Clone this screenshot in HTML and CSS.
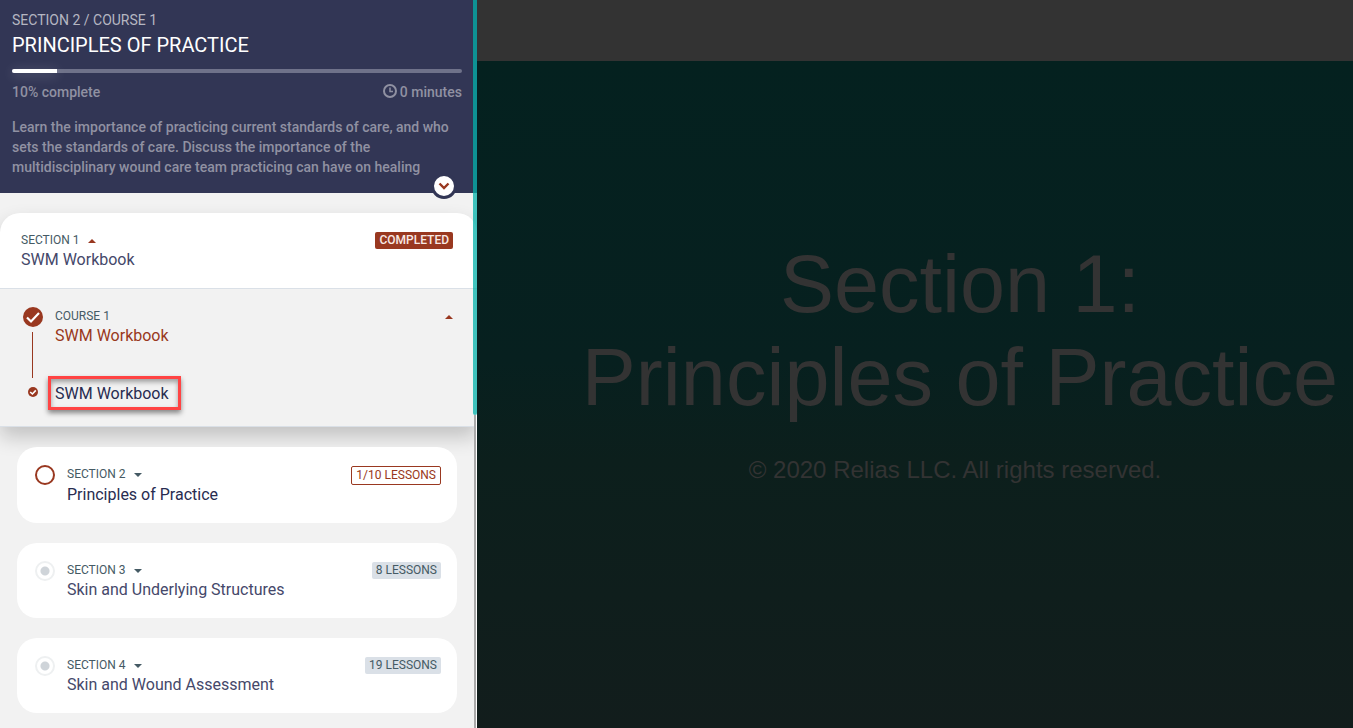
FILE: index.html
```html
<!DOCTYPE html>
<html lang="en">
<head>
    <meta charset="utf-8">
    <title>Principles of Practice</title>
    <link rel="stylesheet" href="styles.css">
</head>
<body>

<div class="player">
    <aside class="sidebar">
        <header class="course-header">
            <div class="course-path">SECTION 2 / COURSE 1</div>
            <h1 class="course-title">PRINCIPLES OF PRACTICE</h1>
            <div class="progress"><div class="progress-bar" style="width: 10%"></div></div>
            <div class="course-meta">
                <span>10% complete</span>
                <span class="time">
                    <svg class="clock" viewBox="0 0 14 14" width="14" height="14" fill="none" stroke="currentColor" stroke-width="2">
                        <circle cx="7" cy="7" r="6"/>
                        <path d="M7 3.5V7.5H10" stroke-width="1.5"/>
                    </svg>
                    0 minutes
                </span>
            </div>
            <p class="course-description">Learn the importance of practicing current standards of care, and who sets the standards of care. Discuss the importance of the multidisciplinary wound care team practicing can have on healing</p>
            <button class="expand" type="button" aria-label="Show more">
                <svg viewBox="0 0 12 8" width="12" height="8" fill="none" stroke="#993820" stroke-width="2.4">
                    <path d="M1.5 1.5L6 6L10.5 1.5"/>
                </svg>
            </button>
        </header>

        <section class="section-open">
            <div class="section-head">
                <button class="section-toggle" type="button">
                    <span class="label">SECTION 1 <i class="caret up"></i></span>
                    <span class="name">SWM Workbook</span>
                </button>
                <span class="badge done">COMPLETED</span>
            </div>
            <div class="section-body">
                <div class="timeline">
                    <svg viewBox="0 0 20 20" width="20" height="20">
                        <circle cx="10" cy="10" r="10" fill="#993820"/>
                        <path d="M4 10.5L8 14.5L16 6" fill="none" stroke="#fff" stroke-width="2.2"/>
                    </svg>
                    <div class="timeline-line"></div>
                    <svg viewBox="0 0 10 10" width="10" height="10">
                        <circle cx="5" cy="5" r="5" fill="#993820"/>
                        <path d="M2.2 5L4.4 7L7.8 3.4" fill="none" stroke="#fff" stroke-width="1.6"/>
                    </svg>
                </div>
                <div class="course">
                    <button class="course-toggle" type="button">
                        <span>
                            <span class="label">COURSE 1</span>
                            <span class="name active">SWM Workbook</span>
                        </span>
                        <i class="caret up"></i>
                    </button>
                    <a class="lesson" href="#">SWM Workbook</a>
                </div>
            </div>
        </section>

        <div class="section-list">
            <section class="card">
                <span class="status current"></span>
                <button class="section-toggle" type="button">
                    <span class="label">SECTION 2 <i class="caret"></i></span>
                    <span class="name dark">Principles of Practice</span>
                </button>
                <span class="badge outline">1/10 LESSONS</span>
            </section>
            <section class="card">
                <span class="status"></span>
                <button class="section-toggle" type="button">
                    <span class="label">SECTION 3 <i class="caret"></i></span>
                    <span class="name">Skin and Underlying Structures</span>
                </button>
                <span class="badge">8 LESSONS</span>
            </section>
            <section class="card">
                <span class="status"></span>
                <button class="section-toggle" type="button">
                    <span class="label">SECTION 4 <i class="caret"></i></span>
                    <span class="name">Skin and Wound Assessment</span>
                </button>
                <span class="badge">19 LESSONS</span>
            </section>
        </div>

        <div class="scroll">
            <div class="scroll-thumb"></div>
            <div class="scroll-track"></div>
        </div>
    </aside>

    <main class="stage">
        <div class="stage-bar"></div>
        <div class="slide">
            <h2 class="slide-title">Section 1:<br>Principles of Practice</h2>
            <p class="slide-copyright">© 2020 Relias LLC. All rights reserved.</p>
        </div>
    </main>
</div>

</body>
</html>
```
FILE: styles.css
```css
* {
    box-sizing: border-box;
}

body {
    margin: 0;
    font-family: Roboto, Arial, sans-serif;
    font-size: 14px;
    color: #45486a;
}

h1, h2, p {
    margin: 0;
    font-weight: normal;
}

button {
    margin: 0;
    padding: 0;
    border: 0;
    background: none;
    font: inherit;
    color: inherit;
    text-align: left;
    cursor: pointer;
}

.player {
    display: flex;
    height: 100vh;
    overflow: hidden;
}

/* sidebar */

.sidebar {
    position: relative;
    flex: 0 0 477px;
    background: #f2f2f2;
    overflow: hidden;
}

.course-header {
    position: relative;
    padding: 10px 15px 16px 12px;
    background: #323655;
    color: #9091a2;
    line-height: 20px;
}

.course-path {
    color: #b5b6c2;
}

.course-title {
    font-size: 20px;
    line-height: 30px;
    color: #fff;
}

.progress {
    height: 4px;
    margin: 9px 0;
    border-radius: 2px;
    background: #6f728a;
}

.progress-bar {
    height: 4px;
    border-radius: 2px 0 0 2px;
    background: #fff;
    box-shadow: 0 2px 12px rgba(255, 255, 255, 0.25);
}

.course-meta {
    display: flex;
    justify-content: space-between;
    margin-bottom: 15px;
    font-weight: 500;
}

.time {
    display: flex;
    align-items: center;
    gap: 3px;
}

.clock {
    margin-bottom: 2px;
}

.course-description {
    font-weight: 500;
}

.expand {
    position: absolute;
    right: 20px;
    bottom: -6px;
    display: flex;
    align-items: center;
    justify-content: center;
    width: 26px;
    height: 26px;
    border: 3px solid #323655;
    border-radius: 50%;
    background: #fff;
}

.label {
    display: flex;
    align-items: center;
    gap: 8px;
    font-size: 12px;
    line-height: 18px;
    color: #455a64;
}

.name {
    display: block;
    font-size: 16px;
    line-height: 22px;
}

.name.active {
    color: #993820;
}

.name.dark {
    margin-top: 1px;
    color: #282c50;
}

.caret {
    margin-top: 2px;
    border: 4px solid transparent;
    border-top-color: #455a64;
    border-bottom-width: 0;
}

.caret.up {
    border-top-width: 0;
    border-bottom: 4px solid #993820;
}

.badge {
    padding: 0 4px;
    border-radius: 2px;
    background: #dae0e7;
    font-size: 12px;
    line-height: 17px;
    color: #455a64;
}

.badge.done {
    background: #993820;
    font-weight: 500;
    color: #f8e9e5;
}

.badge.outline {
    border: 1px solid #993820;
    background: #fff;
    color: #993820;
}

.section-open {
    margin-top: 20px;
    border-radius: 20px 20px 0 0;
    background: #fff;
    box-shadow: 0 10px 20px rgba(0, 0, 0, 0.2);
}

.section-head {
    display: flex;
    justify-content: space-between;
    align-items: flex-start;
    padding: 18px 24px 17px 21px;
    border-bottom: 1px solid #dae0e7;
}

.section-head .badge {
    margin-top: 1px;
}

.section-body {
    display: flex;
    gap: 4px;
    padding: 18px 24px 16px 22px;
    border-bottom: 1px solid #dae0e7;
    background: #f2f2f2;
}

.timeline {
    display: flex;
    flex-direction: column;
    align-items: center;
    width: 22px;
    padding-bottom: 13px;
}

.timeline-line {
    flex: 1;
    align-self: flex-start;
    width: 1px;
    margin: 5px 0 9px 10px;
    background: #993820;
}

.course {
    flex: 1;
}

.course-toggle {
    display: flex;
    justify-content: space-between;
    align-items: flex-start;
    width: 100%;
    margin-bottom: 29px;
    padding-left: 7px;
}

.course-toggle .caret {
    margin-top: 8px;
}

.lesson {
    display: inline-block;
    padding: 4px 9px 2px 4px;
    border: 3px solid #ff4444;
    box-shadow: 0 3px 5px rgba(0, 0, 0, 0.45), inset 0 3px 5px rgba(0, 0, 0, 0.35);
    font-size: 16px;
    line-height: 22px;
    color: #282c50;
    text-decoration: none;
}

.section-list {
    display: flex;
    flex-direction: column;
    gap: 20px;
    padding: 20px 20px 20px 17px;
}

.card {
    display: flex;
    align-items: flex-start;
    gap: 12px;
    padding: 18px 16px 17px 18px;
    border-radius: 20px;
    background: #fff;
}

/* keeps the cards above the open section's shadow */
.section-list {
    position: relative;
}

.card .section-toggle {
    flex: 1;
}

.card .badge {
    margin-top: 1px;
}

.status {
    width: 20px;
    height: 20px;
    border: 2px solid #eef0f1;
    border-radius: 50%;
    background: radial-gradient(circle, #cfd4d9 4px, #fff 5px);
}

.status.current {
    border-color: #993820;
    background: #fff;
}

/* scroll indicator over the sidebar */

.scroll {
    position: absolute;
    top: 0;
    right: 0;
    bottom: 0;
    display: flex;
    flex-direction: column;
    width: 4px;
}

.scroll-thumb {
    flex: 0 0 57%;
    border-radius: 0 0 2px 2px;
    background: rgba(3, 178, 170, 0.75);
}

.scroll-track {
    flex: 1;
    margin-left: 1px;
    border-right: 1px solid #fff;
    background: #aaa;
}

/* slide */

.stage {
    display: flex;
    flex: 1;
    flex-direction: column;
    min-width: 0;
    color: #333;
}

.stage-bar {
    height: 61px;
    background: #333;
}

.slide {
    flex: 1;
    padding: 177px 0 0 90px;
    background: linear-gradient(#04211f, #07201f 45%, #0c1f1c 60%, #121d1c);
    font-family: "Liberation Sans", Arial, sans-serif;
    text-align: center;
}

.slide-title {
    font-size: 81px;
    line-height: 93px;
}

.slide-copyright {
    margin-top: 32px;
    padding-right: 10px;
    font-size: 24px;
    line-height: 28px;
}
```
